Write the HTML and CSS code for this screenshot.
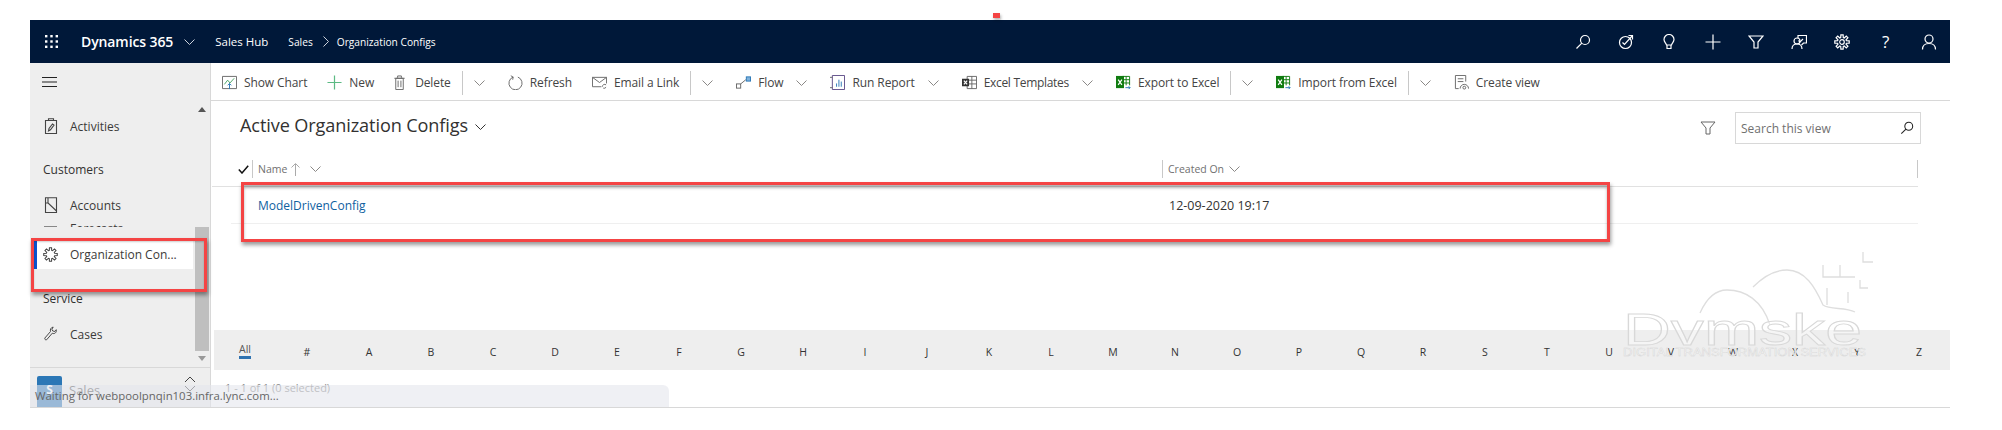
FILE: index.html
```html
<!DOCTYPE html>
<html lang="en">
<head>
<meta charset="utf-8">
<title>Active Organization Configs</title>
<link rel="stylesheet" href="styles.css">
</head>
<body>
<div class="app">
  <header class="topbar">
    <svg class="waffle" viewBox="0 0 13 13"><g fill="#fff"><rect width="2.4" height="2.4"/><rect x="5.3" width="2.4" height="2.4"/><rect x="10.6" width="2.4" height="2.4"/><rect y="5.3" width="2.4" height="2.4"/><rect x="5.3" y="5.3" width="2.4" height="2.4"/><rect x="10.6" y="5.3" width="2.4" height="2.4"/><rect y="10.6" width="2.4" height="2.4"/><rect x="5.3" y="10.6" width="2.4" height="2.4"/><rect x="10.6" y="10.6" width="2.4" height="2.4"/></g></svg>
    <span class="brand">Dynamics 365</span>
    <svg class="chev chev-top" viewBox="0 0 11 6"><path d="M.5.5 5.5 5.5 10.5.5"/></svg>
    <span class="hub">Sales Hub</span>
    <span class="crumb">Sales</span>
    <svg class="crumb-sep" viewBox="0 0 6 11"><path d="M.5.5 5.5 5.5.5 10.5"/></svg>
    <span class="crumb">Organization Configs</span>
    <nav class="top-icons">
      <svg class="ti" viewBox="0 0 16 16"><circle cx="10" cy="6" r="4.5"/><path d="M6.8 9.2 1.5 14.5"/></svg>
      <svg class="ti" viewBox="0 0 16 16"><circle cx="7.5" cy="8.5" r="6"/><path d="M4.5 8.5 6.5 10.5 14.5 1.500M10.500 1.500H14.500V5.500"/></svg>
      <svg class="ti" viewBox="0 0 16 16"><path d="M5.500 11C5 9 3 8 3 5.500a5 5 0 0 1 10 0C13 8 11 9 10.500 11ZM6 11v3.500h4V11"/></svg>
      <svg class="ti" viewBox="0 0 16 16"><path d="M8 .5V15.500M.5 8H15.500"/></svg>
      <svg class="ti" viewBox="0 0 16 16"><path d="M1 2H15L10 8V14H6V8Z"/></svg>
      <svg class="ti" viewBox="0 0 16 16"><path d="M7 4V1.500H15.500V9H12.500L10.500 11"/><circle cx="6" cy="7" r="3"/><path d="M1 15c0-3.500 2.500-5 5-5s5 1.500 5 5M7.500 6.500 9 8l3-3"/></svg>
      <svg class="ti" viewBox="0 0 16 16"><circle cx="8" cy="8" r="2.300"/><polygon points="12.42,6.73 15.21,6.86 15.21,9.14 12.42,9.27 12.02,10.23 13.9,12.29 12.29,13.9 10.23,12.02 9.27,12.42 9.14,15.21 6.86,15.21 6.73,12.42 5.77,12.02 3.71,13.9 2.1,12.29 3.98,10.23 3.58,9.27 .79,9.14 .79,6.86 3.58,6.73 3.98,5.77 2.1,3.71 3.71,2.1 5.77,3.98 6.73,3.58 6.86,.79 9.14,.79 9.27,3.58 10.23,3.98 12.29,2.1 13.9,3.71 12.02,5.77"/></svg>
      <span class="ti-help">?</span>
      <svg class="ti" viewBox="0 0 16 16"><circle cx="8" cy="5" r="4"/><path d="M1.500 15.500C1.500 11 5 9.500 8 9.500s6.500 1.500 6.500 6"/></svg>
    </nav>
  </header>

  <div class="body">
    <aside class="sidebar">
      <div class="burger-row">
        <svg class="burger" viewBox="0 0 15 10"><path d="M0 .5H15M0 5H15M0 9.500H15"/></svg>
      </div>
      <div class="side-scroll">
        <ul class="nav">
          <li class="nav-row">
            <svg class="nav-icon" viewBox="0 0 14 16"><path d="M1.500 2.500H12.500V15.500H1.500ZM4.500 2.500V.8H9.500V2.500ZM4.500 13 5 10.500 8.500 6 10 7.200 6.500 11.800Z"/></svg>
            <span>Activities</span>
          </li>
          <li class="nav-head">Customers</li>
          <li class="nav-row nav-accounts">
            <svg class="nav-icon" viewBox="0 0 14 16"><path d="M1.500.8H12.500V15.500H1.500ZM4 .8V6L12.500 14M1.500 6H4"/></svg>
            <span>Accounts</span>
          </li>
          <li class="nav-sliver"><i class="sliver-mark"></i><span>Forecasts</span></li>
          <li class="nav-row nav-active">
            <svg class="nav-icon nav-icon-gear" viewBox="0 0 16 16"><polygon points="12.42,6.73 15.21,6.86 15.21,9.14 12.42,9.27 12.02,10.23 13.9,12.29 12.29,13.9 10.23,12.02 9.27,12.42 9.14,15.21 6.86,15.21 6.73,12.42 5.77,12.02 3.71,13.9 2.1,12.29 3.98,10.23 3.58,9.27 .79,9.14 .79,6.86 3.58,6.73 3.98,5.77 2.1,3.71 3.71,2.1 5.77,3.98 6.73,3.58 6.86,.79 9.14,.79 9.27,3.58 10.23,3.98 12.29,2.1 13.9,3.71 12.02,5.77"/></svg>
            <span>Organization Con...</span>
          </li>
          <li class="nav-head nav-head-service">Service</li>
          <li class="nav-row">
            <svg class="nav-icon nav-icon-wrench" viewBox="0 0 16 18"><path d="M9.500 7.500 3 15a1.500 1.500 0 0 1-2-2l6.500-7.500c-.8-2 .2-4.500 3-5L9 3l1 2 2.500.5L14 3.500c.8 3-2 5.500-4.500 4Z"/></svg>
            <span>Cases</span>
          </li>
        </ul>
        <div class="scrollbar">
          <span class="arrow arrow-up"></span>
          <div class="thumb"></div>
          <span class="arrow arrow-down"></span>
        </div>
      </div>
      <div class="area">
        <span class="area-tile">S</span>
        <span class="area-name">Sales</span>
        <svg class="area-switch" viewBox="0 0 12 16"><path d="M1 6 6 1l5 5M1 10l5 5 5-5"/></svg>
      </div>
    </aside>

    <main class="main">
      <div class="toolbar">
        <div class="tb">
          <svg class="tb-icon" viewBox="0 0 16 16"><path class="gr" d="M.5 1.500H15.500V14.500H.5Z"/><path class="green" d="M2.500 10 6 5.500l2.500 3L13 3.500"/><path class="blue" d="M8 15V9M6 11l2-2 2 2"/></svg>
          <span>Show Chart</span>
        </div>
        <div class="tb">
          <svg class="tb-icon" viewBox="0 0 16 16"><path class="plus" d="M8 .5V15.500M.5 8H15.500"/></svg>
          <span>New</span>
        </div>
        <div class="tb tb-delete">
          <svg class="tb-icon tb-icon-trash" viewBox="0 0 11 16"><path class="gr" d="M1.500 3.500H9.500V15.500H1.500ZM0 3.500H11M3.500 3V1H7.500V3M4 6V13M7 6V13"/></svg>
          <span>Delete</span>
        </div>
        <i class="tb-sep"></i>
        <svg class="chev" viewBox="0 0 11 6"><path d="M.5.5 5.500 5.500 10.500.5"/></svg>
        <div class="tb">
          <svg class="tb-icon" viewBox="0 0 16 16"><path class="gr" d="M5.500 2.200A7 7 0 1 0 10.500 2.200M3 .8 5.500 2.200 5 5"/></svg>
          <span>Refresh</span>
        </div>
        <div class="tb">
          <svg class="tb-icon" viewBox="0 0 16 16"><path class="gr" d="M10 12.500H.5V2.500H15.500V9M.5 2.500 8 8l7.500-5.500M11 12.500a2.500 2.500 0 0 1 4-2M15 13a2.500 2.500 0 0 1-3 1"/></svg>
          <span>Email a Link</span>
        </div>
        <i class="tb-sep"></i>
        <svg class="chev" viewBox="0 0 11 6"><path d="M.5.5 5.500 5.500 10.500.5"/></svg>
        <div class="tb">
          <svg class="tb-icon" viewBox="0 0 16 16"><rect class="gr" x=".5" y="9.500" width="4.500" height="4.500"/><path class="gr" d="M5 9.500 10.500 5"/><rect class="blue-fill" x="11" y="2" width="4.500" height="4.500"/></svg>
          <span>Flow</span>
        </div>
        <svg class="chev chev-split" viewBox="0 0 11 6"><path d="M.5.5 5.500 5.500 10.500.5"/></svg>
        <div class="tb">
          <svg class="tb-icon" viewBox="0 0 16 16"><path class="purple" d="M2.500.5H15.500V15.500H2.500Z"/><path class="gr" d="M0 2.500H2.500M0 13.500H2.500"/><path class="blue" d="M7 9V12.500M9.500 5V12.500M12 7V12.500"/></svg>
          <span>Run Report</span>
        </div>
        <svg class="chev chev-split" viewBox="0 0 11 6"><path d="M.5.5 5.500 5.500 10.500.5"/></svg>
        <div class="tb tb-tight">
          <svg class="tb-icon" viewBox="0 0 16 16"><path class="gr" d="M5.500 1.500H15.500V14.500H5.500ZM5.500 5.500H15.500M5.500 9.500H15.500M10.500 1.500V14.500"/><rect class="dark-fill" x="0" y="4" width="7.500" height="8"/><path class="white" d="M2 6l3.500 4M5.500 6 2 10"/></svg>
          <span>Excel Templates</span>
        </div>
        <svg class="chev chev-split" viewBox="0 0 11 6"><path d="M.5.5 5.500 5.500 10.500.5"/></svg>
        <div class="tb">
          <svg class="tb-icon" viewBox="0 0 16 16"><path class="green-thin" d="M7 1.500H14.500V11M7 5H14.500M7 8.500H14.500M10.800 1.500V11"/><rect class="xl-fill" x="0" y="1" width="8.500" height="13"/><path class="white" d="M2.300 5l4 5.500M6.300 5l-4 5.500"/><path class="blue" d="M10 13.500H15M13.500 12 15 13.500 13.500 15"/></svg>
          <span>Export to Excel</span>
        </div>
        <i class="tb-sep"></i>
        <svg class="chev" viewBox="0 0 11 6"><path d="M.5.5 5.500 5.500 10.500.5"/></svg>
        <div class="tb">
          <svg class="tb-icon" viewBox="0 0 16 16"><path class="green-thin" d="M7 1.500H14.500V11M7 5H14.500M7 8.500H14.500M10.800 1.500V11"/><rect class="xl-fill" x="0" y="1" width="8.500" height="13"/><path class="white" d="M2.300 5l4 5.500M6.300 5l-4 5.500"/><path class="blue" d="M10 13.500H15M13.500 12 15 13.500 13.500 15"/></svg>
          <span>Import from Excel</span>
        </div>
        <i class="tb-sep"></i>
        <svg class="chev" viewBox="0 0 11 6"><path d="M.5.5 5.500 5.500 10.500.5"/></svg>
        <div class="tb tb-last">
          <svg class="tb-icon" viewBox="0 0 16 16"><path class="gr" d="M5 14.500H1.500V.5H12.500V7M4 4H10M4 7H10M6.500 14.500a4.500 4.500 0 0 1 9 0"/><circle class="gr" cx="11" cy="13.500" r="1.500"/></svg>
          <span>Create view</span>
        </div>
      </div>

      <div class="view-head">
        <h1 class="view-title">Active Organization Configs</h1>
        <svg class="chev chev-title" viewBox="0 0 11 6"><path d="M.5.5 5.500 5.500 10.500.5"/></svg>
        <svg class="view-filter" viewBox="0 0 16 16"><path d="M1 2H15L10 8V14H6V8Z"/></svg>
        <div class="search">
          <span>Search this view</span>
          <svg class="search-icon" viewBox="0 0 16 16"><circle cx="10" cy="6" r="4.500"/><path d="M6.800 9.200 1.500 14.500"/></svg>
        </div>
      </div>

      <div class="grid">
        <div class="grid-head">
          <div class="col-name">
            <svg class="check" viewBox="0 0 11 9"><path d="M.8 4.500 4 8 10.200.8"/></svg>
            <i class="col-sep"></i>
            <span class="col-label">Name</span>
            <svg class="sort" viewBox="0 0 9 13"><path d="M4.500 13V1M.5 4.500 4.500.5l4 4"/></svg>
            <svg class="chev" viewBox="0 0 11 6"><path d="M.5.5 5.500 5.500 10.500.5"/></svg>
          </div>
          <div class="col-date">
            <i class="col-sep"></i>
            <span class="col-label">Created On</span>
            <svg class="chev" viewBox="0 0 11 6"><path d="M.5.5 5.500 5.500 10.500.5"/></svg>
          </div>
          <i class="col-sep col-end"></i>
        </div>
        <div class="grid-row">
          <a class="cell-name">ModelDrivenConfig</a>
          <span class="cell-date">12-09-2020 19:17</span>
        </div>
      </div>

      <div class="spacer"></div>

      <div class="alpha">
        <span class="alpha-all">All</span><span>#</span><span>A</span><span>B</span><span>C</span><span>D</span><span>E</span><span>F</span><span>G</span><span>H</span><span>I</span><span>J</span><span>K</span><span>L</span><span>M</span><span>N</span><span>O</span><span>P</span><span>Q</span><span>R</span><span>S</span><span>T</span><span>U</span><span>V</span><span>W</span><span>X</span><span>Y</span><span>Z</span>
      </div>
      <div class="status">1 - 1 of 1 (0 selected)</div>
    </main>
  </div>
</div>

<div class="waiting">Waiting for webpoolpnqin103.infra.lync.com...</div>

<svg class="watermark" viewBox="0 0 270 120">
  <path class="wm-line" d="M90 68C98 50 108 45 117 45 135 45 152 55 160 80M143 42C155 30 165 25 177 25 195 25 205 42 213 60 220 65 235 62 245 67"/>
  <path class="wm-line" d="M213 20V32H230M230 20V32H245M253 7V17H263M250 35V43H258M217 43V60M238 47V58"/>
  <text class="wm-big" x="13" y="100" textLength="239" lengthAdjust="spacingAndGlyphs">Dvmske</text>
  <text class="wm-small" x="13" y="111" textLength="243" lengthAdjust="spacingAndGlyphs">DIGITAL TRANSFORMATION SERVICES</text>
</svg>

<div class="callout callout-row"></div>
<div class="callout callout-nav"></div>
<div class="callout callout-dot"></div>
</body>
</html>
```

FILE: styles.css
```css
* { box-sizing: border-box; }
html, body { margin: 0; height: 100%; background: #fff; }
body {
  position: relative;
  width: 2002px;
  height: 430px;
  overflow: hidden;
  padding: 20px 52px 0 30px;
  font-family: "Open Sans", "Noto Sans", sans-serif;
  font-size: 12px;
  color: #3b3a39;
}
svg { display: block; flex: none; fill: none; }
.chev { width: 11px; height: 6px; stroke: #8a8886; stroke-width: 1; }

.app {
  width: 1920px;
  height: 388px;
  display: flex;
  flex-direction: column;
  border-bottom: 1px solid #d8d8d8;
}

/* top bar */
.topbar {
  height: 43px;
  flex: none;
  background: #001839;
  color: #fff;
  display: flex;
  align-items: center;
  padding-left: 15px;
}
.waffle { width: 13px; height: 13px; margin-right: 23px; }
.brand { font-size: 14px; font-weight: 600; letter-spacing: -.1px; }
.chev-top { margin: 0 20px 0 11px; stroke: #ccd2dc; }
.hub { font-size: 11.500px; margin-right: 20px; }
.crumb { font-size: 10.200px; }
.crumb-sep { width: 6px; height: 11px; margin: 0 8px 0 10px; stroke: #ccd2dc; }
.top-icons {
  margin-left: auto;
  display: flex;
  align-items: center;
  gap: 27.300px;
  padding-right: 13px;
}
.ti { width: 16px; height: 16px; stroke: #fff; stroke-width: 1.200; }
.ti-help { width: 16px; text-align: center; font-size: 17px; line-height: 16px; }

/* body */
.body { flex: 1; display: flex; min-height: 0; }
.sidebar {
  width: 181px;
  flex: none;
  background: #eee;
  border-right: 1px solid #d8d8d8;
  display: flex;
  flex-direction: column;
}
.burger-row { height: 38px; flex: none; display: flex; align-items: center; padding-left: 12px; }
.burger { width: 15px; height: 10px; stroke: #222; stroke-width: 1; }
.side-scroll { height: 267px; flex: none; display: flex; overflow: hidden; border-bottom: 1px solid #d8d8d8; }
.nav { list-style: none; margin: 0; padding: 6px 0 0 4px; width: 163px; flex: none; color: #3b3a39; }
.nav-row { height: 38px; display: flex; align-items: center; padding-left: 10px; }
.nav-accounts span, .nav-accounts svg { position: relative; top: 1px; }
.nav-icon { width: 14px; height: 16px; stroke: #444; stroke-width: 1.100; margin-right: 12px; }
.nav-head { height: 30px; margin-top: 10px; padding-left: 9px; line-height: 30px; font-weight: 500; color: #323130; }
.nav-sliver {
  height: 4px;
  margin-bottom: 12px;
  padding-left: 10px;
  display: flex;
  align-items: flex-end;
  overflow: hidden;
  line-height: 14px;
}
.nav-sliver span { flex: none; margin-bottom: -9px; }
.sliver-mark { width: 13px; height: 1px; background: #888; margin-right: 13px; flex: none; }
.nav-active {
  height: 30px;
  background: #fff;
  border-left: 3px solid #0b53ce;
  padding-left: 6px;
}
.nav-icon-gear { width: 15px; height: 15px; margin-right: 12px; }
.nav-head-service { margin-top: 15px; margin-bottom: 1px; }
.nav-icon-wrench { width: 14px; height: 17px; }

.scrollbar { flex: 1; position: relative; padding: 0 2px; }
.thumb { position: absolute; left: 2px; right: 1px; top: 126px; height: 124px; background: #bfbfbf; }
.arrow { position: absolute; left: 5px; border-left: 4px solid transparent; border-right: 4px solid transparent; }
.arrow-up { top: 6px; border-bottom: 5px solid #555; }
.arrow-down { top: 255px; border-top: 5px solid #999; }

.area { flex: 1; display: flex; align-items: flex-start; padding: 8px 0 0 7px; position: relative; }
.area-tile {
  width: 25px;
  height: 31px;
  background: #2b77b6;
  color: #fff;
  font-weight: 700;
  border-radius: 2px 2px 0 0;
  text-align: center;
  line-height: 28px;
}
.area-name { margin: 5px 0 0 7px; font-size: 13px; color: #555; }
.area-switch { width: 12px; height: 16px; stroke: #444; stroke-width: 1; position: absolute; right: 14px; top: 8px; }

/* main */
.main { flex: 1; min-width: 0; display: flex; flex-direction: column; }
.toolbar {
  height: 38px;
  flex: none;
  border-bottom: 1px solid #d8d8d8;
  display: flex;
  align-items: center;
  padding: 2px 0 0 11px;
  white-space: nowrap;
  color: #444;
  letter-spacing: -.1px;
}
.tb { display: flex; align-items: center; gap: 7px; margin-right: 20px; }
.tb-tight { letter-spacing: -.3px; }
.tb-icon { width: 15px; height: 15px; stroke-width: 1; }
.tb-icon-trash { width: 11px; margin-right: 3px; }
.tb:has(+ .tb-sep) { margin-right: 11px; }
.tb-sep { width: 1px; height: 24px; background: #c8c8c8; margin-right: 11px; flex: none; }
.toolbar > .chev { margin-right: 23px; }
.toolbar > .chev-split { margin: 0 23px 0 -7px; }
.tb-last { margin-right: 0; }
.gr { stroke: #666; }
.green { stroke: #45a162; }
.blue { stroke: #2b77b6; }
.blue-fill { fill: #7fb2dc; stroke: #2b77b6; }
.purple { stroke: #5c4a86; }
.plus { stroke: #5cba84; stroke-width: 1.300; }
.dark-fill { fill: #333; }
.white { stroke: #fff; stroke-width: 1.300; }
.xl-fill { fill: #107c10; }
.green-thin { stroke: #107c10; }

.view-head {
  height: 54px;
  flex: none;
  display: flex;
  align-items: center;
  padding: 0 29px;
}
.view-title { margin: 0 0 5px; font-size: 18.100px; font-weight: 400; color: #323130; line-height: 1; letter-spacing: -.1px; }
.chev-title { margin: 0 0 2px 7px; stroke: #333; }
.view-filter { width: 16px; height: 16px; margin: 0 19px 0 auto; stroke: #666; stroke-width: 1; }
.search {
  width: 186px;
  height: 32px;
  border: 1px solid #d8d8d8;
  display: flex;
  align-items: center;
  justify-content: space-between;
  padding: 0 6px 0 5px;
  color: #707070;
}
.search-icon { width: 14px; height: 14px; stroke: #222; stroke-width: 1.200; }

.grid { width: 1706px; flex: none; margin-left: 1px; }
.grid-head { height: 32px; display: flex; align-items: center; border-bottom: 1px solid #e1e1e1; position: relative; padding-bottom: 3px; }
.col-name { width: 950px; display: flex; align-items: center; padding-left: 26px; flex: none; }
.col-date { display: flex; align-items: center; flex: 1; }
.check { width: 11px; height: 9px; stroke: #111; stroke-width: 1.500; }
.col-sep { width: 1px; height: 18px; background: #c8c8c8; flex: none; display: block; }
.col-name .col-sep { margin: 0 5px 0 3px; }
.col-date .col-sep { margin-right: 5px; }
.col-label { font-size: 10.500px; color: #707070; }
.sort { width: 9px; height: 13px; margin: 0 10px 0 4px; stroke: #aaa; stroke-width: 1; }
.col-date .chev { margin-left: 5px; }
.col-end { position: absolute; right: 0; top: 5px; }
.grid-row {
  height: 37px;
  margin-left: 19px;
  border-bottom: 1px solid #efefef;
  display: flex;
  align-items: center;
  padding: 1px 0 0 27px;
}
.cell-name { width: 911px; flex: none; color: #0f619f; }
.cell-date { color: #333; font-size: 12.500px; }

.spacer { flex: 1; }
.alpha {
  height: 40px;
  flex: none;
  background: #eee;
  display: grid;
  grid-template-columns: repeat(28, 62px);
  align-items: center;
  justify-items: center;
  margin-left: 3px;
  font-size: 10.500px;
  color: #333;
  padding-top: 4px;
}
.alpha-all { color: #555; border-bottom: 3px solid #2f72b0; line-height: 13px; margin-top: -2px; }
.status { height: 37px; flex: none; padding: 10px 0 0 14px; font-size: 11px; color: #888; }

/* overlays */
.waiting {
  position: absolute;
  left: 30px;
  top: 385px;
  width: 639px;
  height: 22px;
  background: rgba(228, 230, 236, .6);
  border-radius: 0 6px 0 0;
  padding: 3px 0 0 5px;
  font-size: 11.400px;
  color: #666;
  white-space: nowrap;
}
.watermark { position: absolute; left: 1610px; top: 245px; width: 270px; height: 120px; overflow: visible; }
.wm-line { stroke: #dedede; stroke-width: 1.300; fill: none; }
.wm-big { font-family: "Liberation Sans", sans-serif; font-size: 44px; fill: rgba(255,255,255,.4); stroke: #d8d8d8; stroke-width: .9; }
.wm-small { font-family: "Liberation Sans", sans-serif; font-size: 10.500px; fill: #fafafa; stroke: #d4d4d4; stroke-width: .4; }

.callout {
  position: absolute;
  border: 3px solid #f44444;
}
.callout-row { left: 241px; top: 182px; width: 1369px; height: 60px; box-shadow: 1px 3px 4px rgba(0,0,0,.4), inset 0 3px 3px rgba(0,0,0,.3); }
.callout-nav { left: 31px; top: 238px; width: 176px; height: 54px; box-shadow: 1px 3px 4px rgba(0,0,0,.4), inset 0 1px 2px rgba(0,0,0,.2); }
.callout-dot { left: 993px; top: 13px; width: 7px; height: 5px; border: 0; background: #f44444; box-shadow: 1px 2px 3px rgba(0,0,0,.3); }
```
